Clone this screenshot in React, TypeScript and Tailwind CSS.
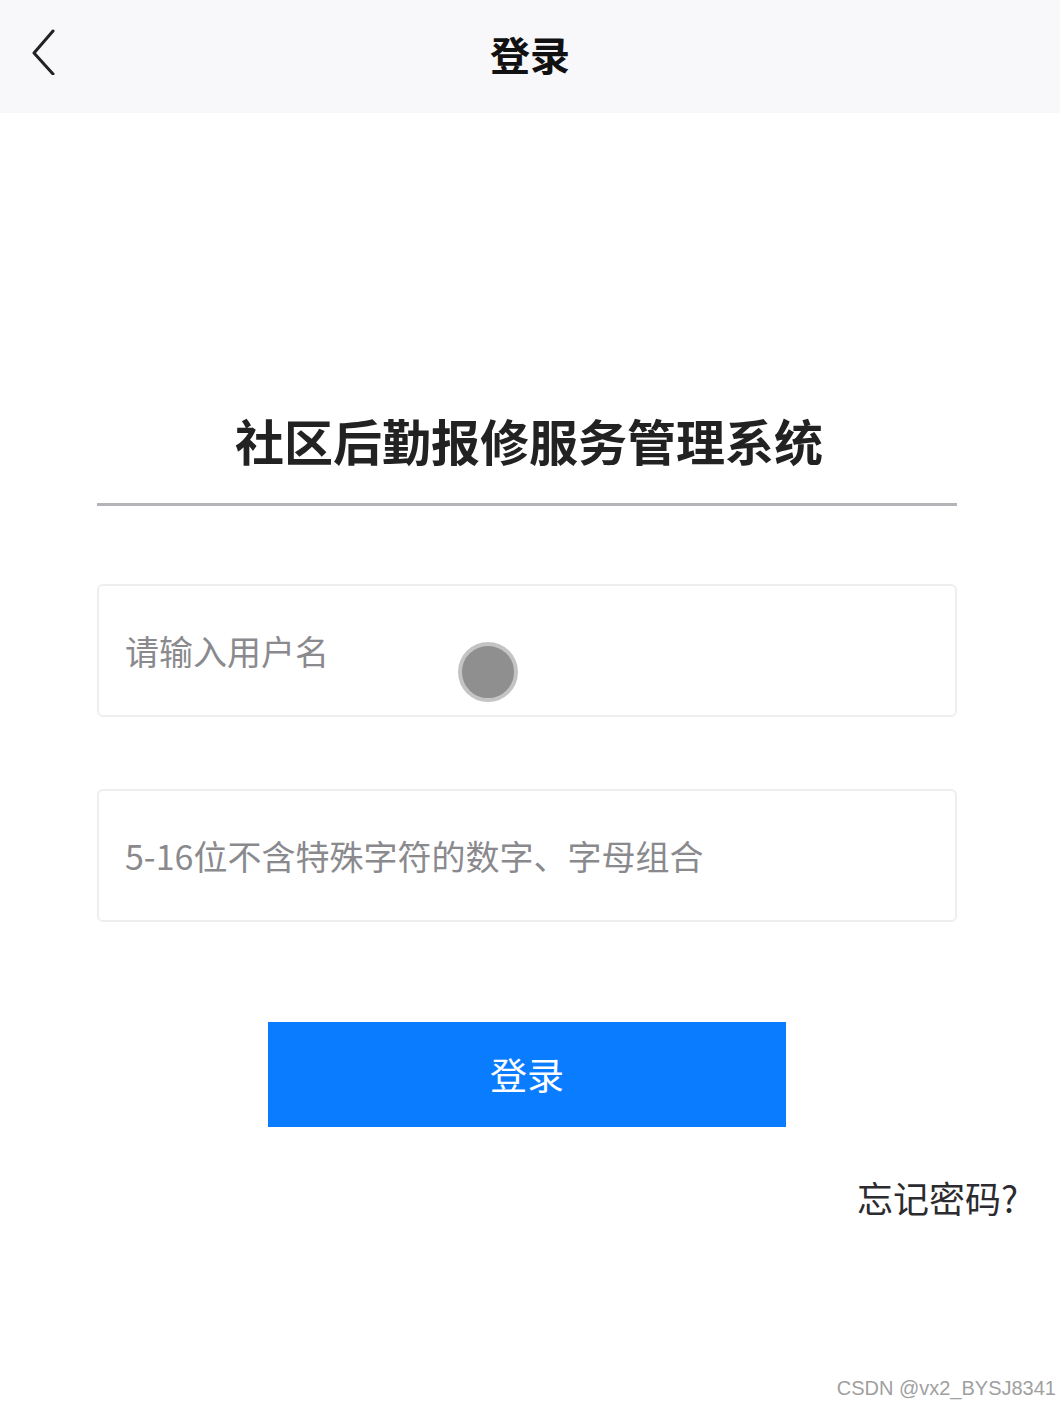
import React from "react";

export default function App() {
  const font = { fontFamily: '"Noto Sans CJK SC", "Noto Sans", sans-serif' };
  return (
    <div className="relative w-[1060px] h-[1404px] bg-white overflow-hidden" style={font}>
      <div className="relative h-[113px] bg-[#f8f7f9] flex items-center justify-center">
        <svg className="absolute left-[28px] top-[29px]" width="30" height="46" viewBox="0 0 30 46">
          <path d="M25 2 L6 24 L25 45" fill="none" stroke="#222" strokeWidth="3" strokeLinecap="round" strokeLinejoin="round" />
        </svg>
        <span className="text-[40px] font-bold text-[#111] leading-none -mt-[6px]">登录</span>
      </div>

      <div className="ml-[97px] mr-[103px]">
        <div className="mt-[302px] flex justify-center">
          <h1 className="text-[49px] font-bold text-[#222] leading-none pl-[4px]">社区后勤报修服务管理系统</h1>
        </div>
        <div className="mt-[39px] h-[3px] bg-[#b4b4b8]" />

        <div className="mt-[78px] h-[133px] rounded-[6px] border-2 border-[#eeeef1] flex items-center pl-[26px]">
          <span className="text-[34px] text-[#8a8a8e] leading-none">请输入用户名</span>
        </div>

        <div className="mt-[72px] h-[133px] rounded-[6px] border-2 border-[#eeeef1] flex items-center pl-[26px]">
          <span className="text-[34px] text-[#8a8a8e] leading-none">5-16位不含特殊字符的数字、字母组合</span>
        </div>

        <div className="mt-[100px] flex justify-center">
          <div className="w-[518px] h-[105px] bg-[#0a7cff] flex items-center justify-center">
            <span className="text-[37px] text-white leading-none">登录</span>
          </div>
        </div>
      </div>

      <div className="mt-[52px] flex justify-end pr-[42px]">
        <span className="text-[36px] text-[#2c2c30] leading-none">忘记密码?</span>
      </div>

      <div className="absolute left-[458px] top-[642px] w-[60px] h-[60px] rounded-full bg-[#8f8f8f] border-[4px] border-[#c4c4c4]" />

      <div className="absolute right-[4px] bottom-[6px] text-[20px] text-[#a0a0a0] leading-none" style={{ fontFamily: '"Liberation Sans", sans-serif' }}>
        CSDN @vx2_BYSJ8341
      </div>
    </div>
  );
}
